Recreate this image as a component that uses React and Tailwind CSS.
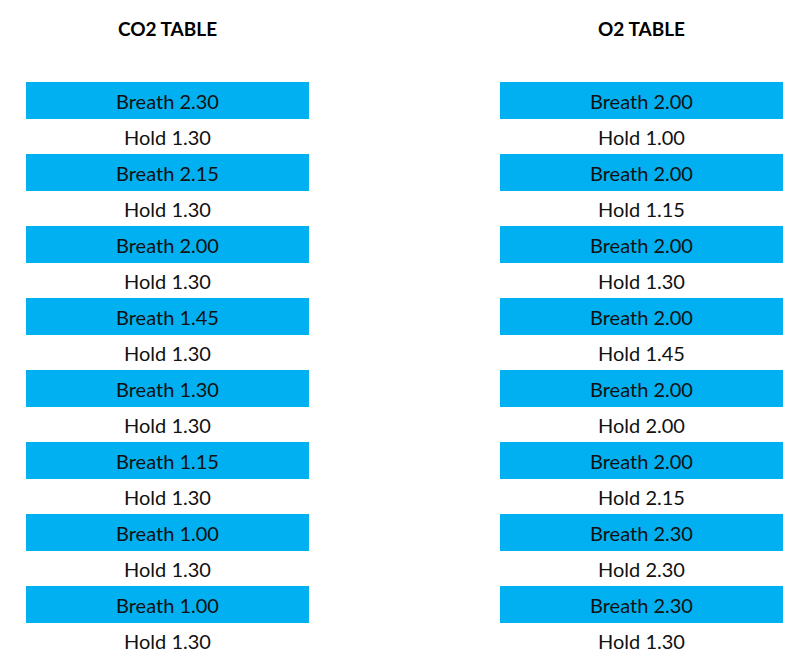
import React from 'react';

const co2 = [
  ['Breath 2.30', 'Hold 1.30'],
  ['Breath 2.15', 'Hold 1.30'],
  ['Breath 2.00', 'Hold 1.30'],
  ['Breath 1.45', 'Hold 1.30'],
  ['Breath 1.30', 'Hold 1.30'],
  ['Breath 1.15', 'Hold 1.30'],
  ['Breath 1.00', 'Hold 1.30'],
  ['Breath 1.00', 'Hold 1.30'],
];

const o2 = [
  ['Breath 2.00', 'Hold 1.00'],
  ['Breath 2.00', 'Hold 1.15'],
  ['Breath 2.00', 'Hold 1.30'],
  ['Breath 2.00', 'Hold 1.45'],
  ['Breath 2.00', 'Hold 2.00'],
  ['Breath 2.00', 'Hold 2.15'],
  ['Breath 2.30', 'Hold 2.30'],
  ['Breath 2.30', 'Hold 1.30'],
];

function Table({ title, rows }) {
  return (
    <div className="w-[283px] flex flex-col">
      {/* title */}
      <div className="h-[82px] pt-[17px] text-center text-[19px] font-bold leading-[24px] text-black">
        {title}
      </div>
      {rows.map(([breath, hold], i) => (
        <div key={i}>
          <div className="h-[37px] bg-[#00b0f0] flex items-center justify-center text-[20px] text-[#111]">
            {breath}
          </div>
          <div className="h-[35px] flex items-center justify-center text-[20px] text-[#111]">
            {hold}
          </div>
        </div>
      ))}
    </div>
  );
}

export default function App() {
  return (
    <div className="w-[808px] h-[670px] bg-white overflow-hidden" style={{ fontFamily: 'Lato, "Open Sans", sans-serif' }}>
      <div className="flex gap-[191px] pl-[26px]">
        <Table title="CO2 TABLE" rows={co2} />
        <Table title="O2 TABLE" rows={o2} />
      </div>
    </div>
  );
}
